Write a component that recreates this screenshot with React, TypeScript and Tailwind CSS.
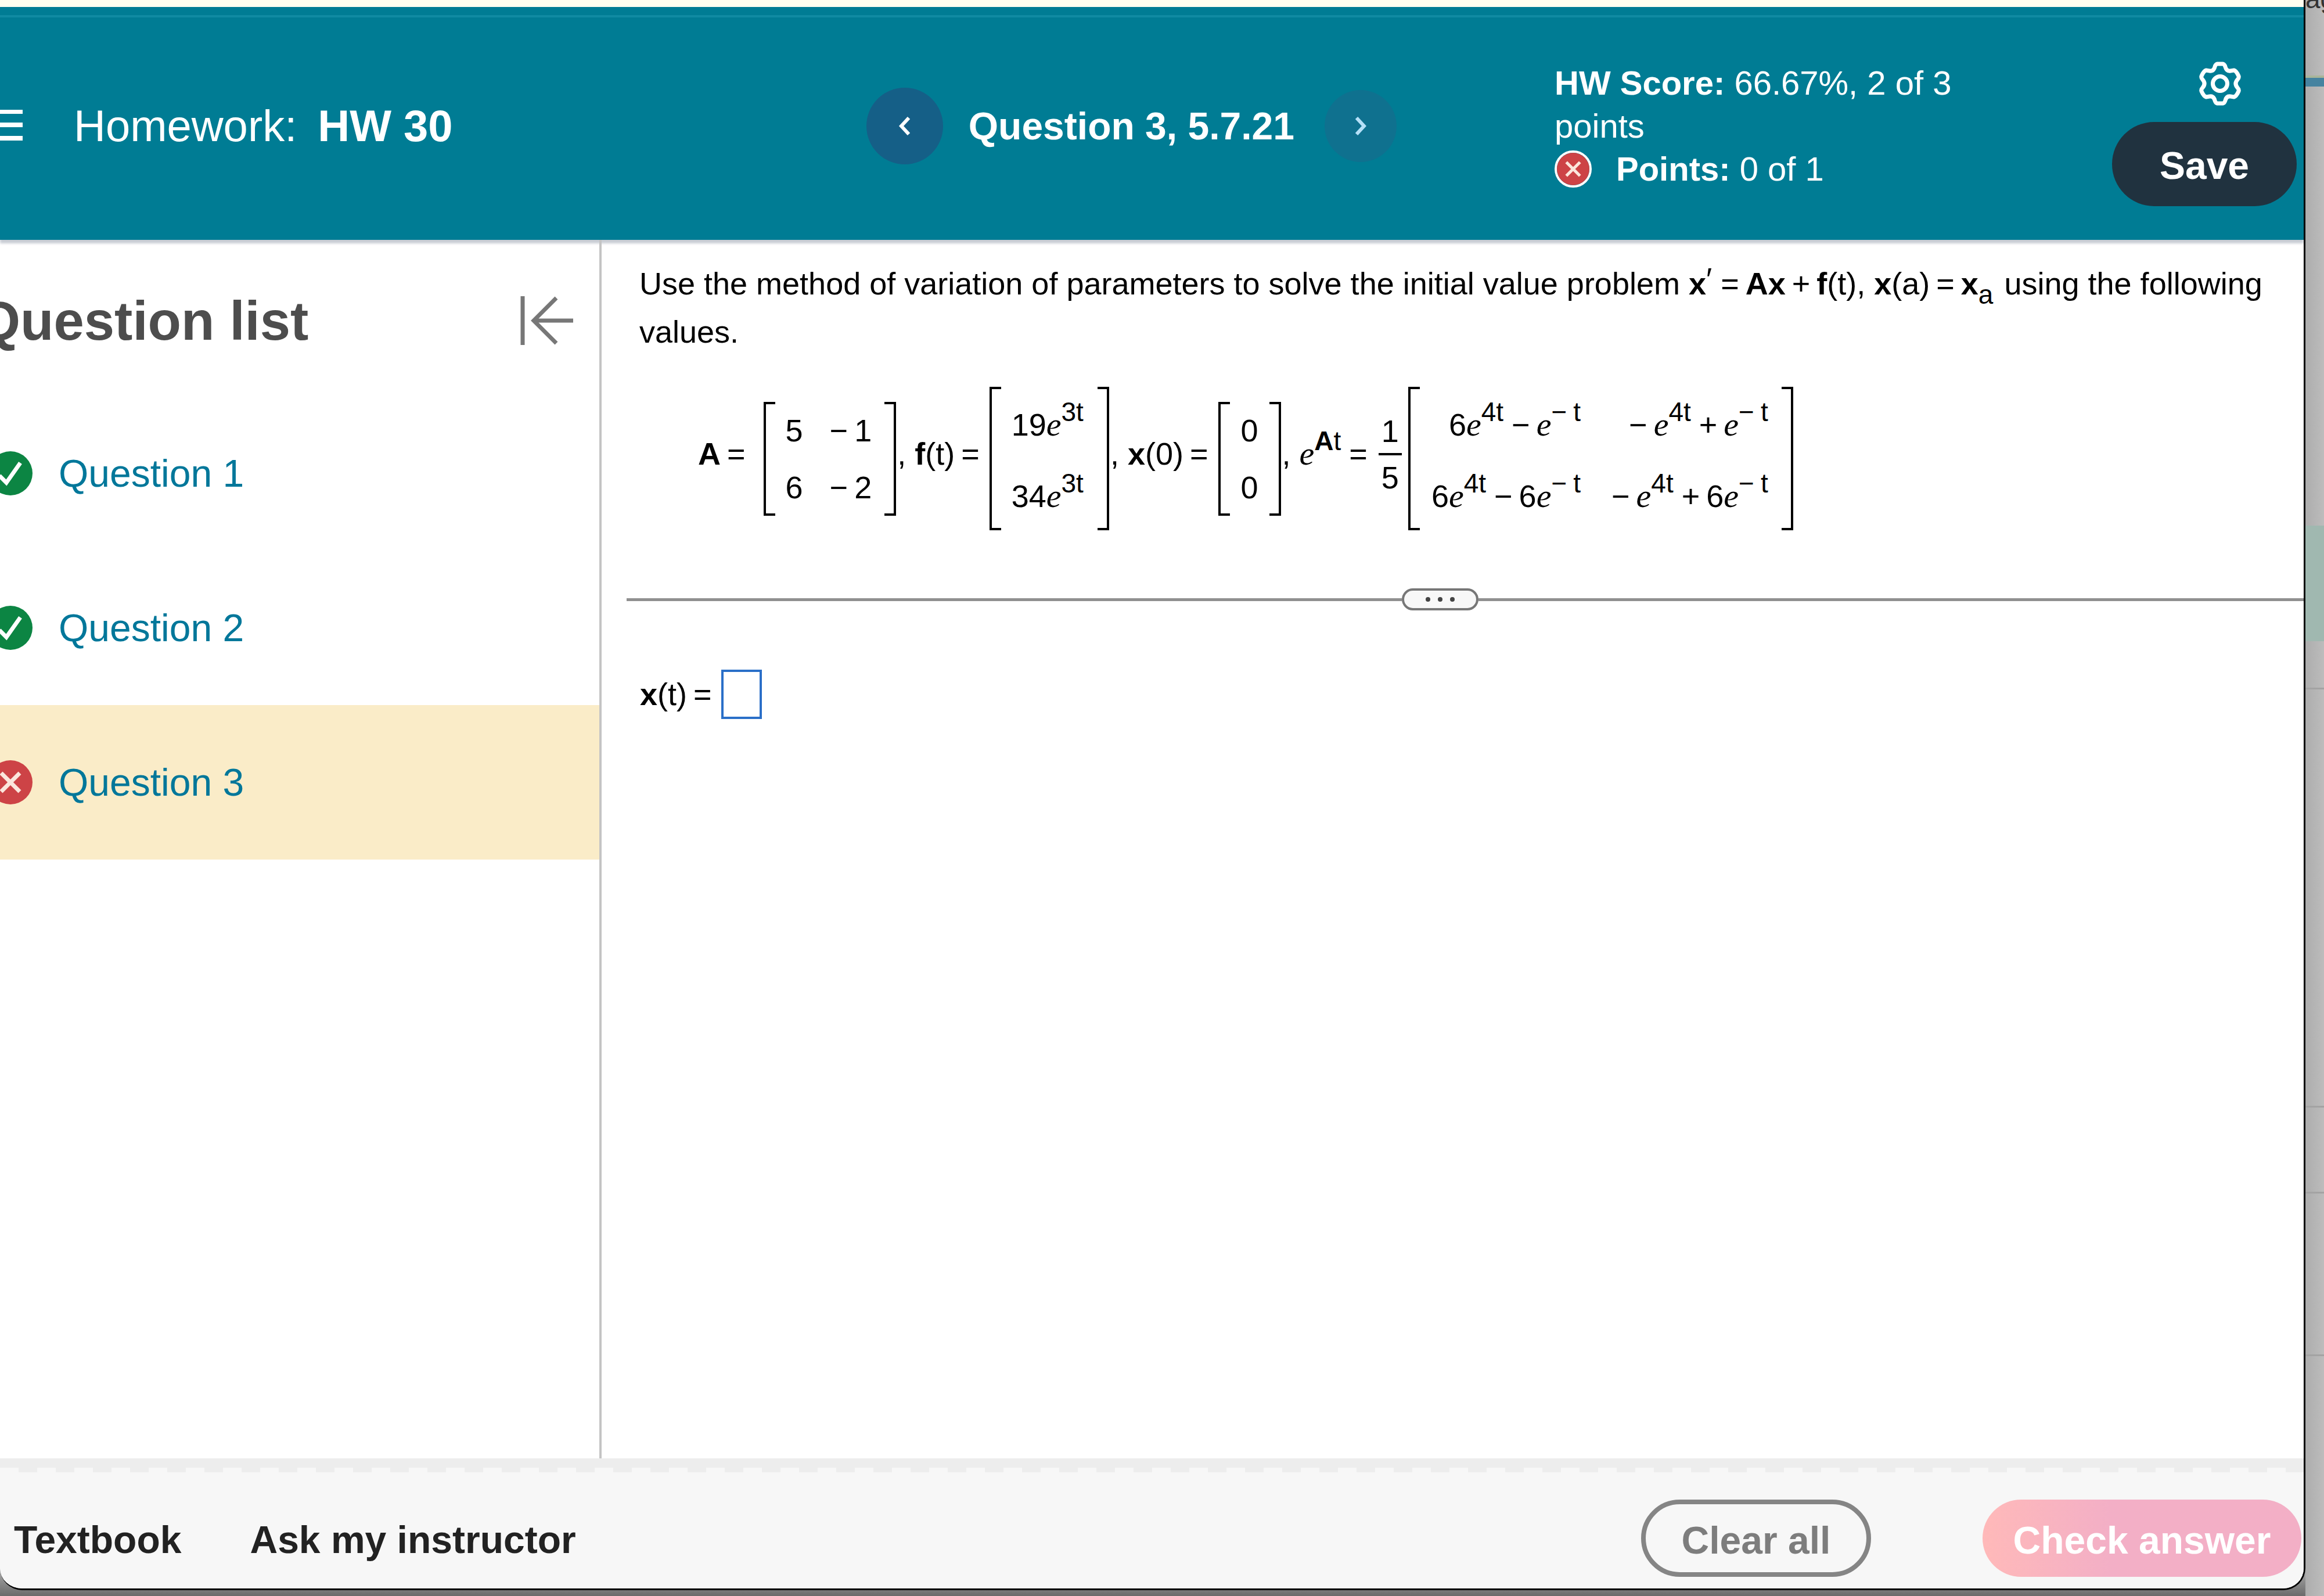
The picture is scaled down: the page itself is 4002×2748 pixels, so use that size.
import type { ReactNode } from "react";

const questions = [
  { label: "Question 1", correct: true },
  { label: "Question 2", correct: true },
  { label: "Question 3", correct: false, active: true },
];

// rules of the page that shows behind the window, with the gap above each
const backdropRows = [
  { gap: "h-[130px]", row: "h-[4px] bg-[#a9b59a]" },
  { gap: "h-0", row: "h-[15px] bg-[#4683a0]" },
  { gap: "h-[756px]", row: "h-[199px] bg-[#a0b8b0]" },
  { gap: "h-[80px]", row: "h-[3px] bg-[#a3a3a3]" },
  { gap: "h-[717px]", row: "h-[3px] bg-[#a3a3a3]" },
  { gap: "h-[145px]", row: "h-[3px] bg-[#a3a3a3]" },
  { gap: "h-[277px]", row: "h-[3px] bg-[#a3a3a3]" },
];

function StatusIcon({ correct, className }: { correct: boolean; className: string }) {
  return (
    <svg viewBox="0 0 76 76" className={className} fill="none" aria-hidden="true">
      <circle cx="38" cy="38" r="38" fill={correct ? "#0c8543" : "#cd4346"} />
      {correct ? (
        <path d="M19 42 L31 54 L55 20" stroke="#fff" strokeWidth="7" />
      ) : (
        <path d="M22 22 L54 54 M54 22 L22 54" stroke="#fbe6dc" strokeWidth="7" />
      )}
    </svg>
  );
}

function GearIcon() {
  return (
    <svg viewBox="0 0 76 76" className="size-[76px]" fill="none" stroke="#fff" strokeWidth="7" strokeLinejoin="round" aria-hidden="true">
      <path d="M33 4 H43 Q46 5 47 9 Q49 17 56 16 L62 15 Q66 16 70 25 Q71 28 68 31 Q62 38 68 45 Q71 48 70 51 Q66 60 62 61 L56 60 Q49 59 47 67 Q46 71 43 72 H33 Q30 71 29 67 Q27 59 20 60 L14 61 Q10 60 6 51 Q5 48 8 45 Q14 38 8 31 Q5 28 6 25 Q10 16 14 15 L20 16 Q27 17 29 9 Q30 5 33 4 Z" />
      <circle cx="38" cy="38" r="12.5" />
    </svg>
  );
}

function Op({ children }: { children: string }) {
  return <span className="mx-[11px]">{children}</span>;
}

function E() {
  return <i className="font-['Liberation_Serif',serif] text-[58px] leading-0">e</i>;
}

function Sup({ children }: { children: ReactNode }) {
  return <span className="mr-[3px] align-[25px] text-[46px] leading-0">{children}</span>;
}

function Neg({ children }: { children?: ReactNode }) {
  return (
    <>
      <span className="mr-[11px]">−</span>
      {children}
    </>
  );
}

function Matrix({ rows, tall, columns }: { rows: ReactNode[][]; tall?: boolean; columns: string }) {
  return (
    <span className="flex">
      <span className="w-[20px] border-y-4 border-l-4 border-black" />
      <span className={`grid ${columns} ${tall ? "gap-y-[5px] pt-[6px] leading-[118px]" : "leading-[98px]"}`}>
        {rows.flat().map((cell, i) => (
          <span key={i}>{cell}</span>
        ))}
      </span>
      <span className="w-[20px] border-y-4 border-r-4 border-black" />
    </span>
  );
}

function Term({ children }: { children: ReactNode }) {
  return <span className="ml-[2px] pb-[16px] whitespace-pre">{children}</span>;
}

function Header() {
  return (
    <header className="border-t-12 border-[#fffff0] bg-[#007c94] text-white shadow-[0_6px_4px_#c8ccd4]">
      <div className="mt-[14px] h-[4px] bg-[#108aa2]" />
      <div className="flex h-[383px] items-center pb-[10px]">
        <button className="mr-[88px] w-[39px]" aria-label="Menu">
          <svg viewBox="0 0 39 56" className="h-[56px] w-[39px]" stroke="#fff" strokeWidth="8">
            <path d="M0 3 H39 M0 26 H39 M0 49 H39" />
          </svg>
        </button>
        <h1 className="flex flex-1 gap-[36px] text-[76px] leading-[80px]">
          <span>Homework:</span>
          <b>HW 30</b>
        </h1>
        <nav className="mr-[272px] flex items-center">
          <button className="flex size-[132px] items-center justify-center rounded-full bg-[#155f87]" aria-label="Previous question">
            <svg viewBox="0 0 20 32" className="h-[32px] w-[20px]" fill="none" stroke="#fff" strokeWidth="6">
              <path d="M17 2 L4 16 L17 30" />
            </svg>
          </button>
          <h2 className="mr-[52px] ml-[44px] text-[66px] leading-[80px] font-bold">Question 3, 5.7.21</h2>
          <button className="flex size-[124px] items-center justify-center rounded-full bg-[#0f718f]" aria-label="Next question">
            <svg viewBox="0 0 20 32" className="h-[32px] w-[20px]" fill="none" stroke="#b5e0f8" strokeWidth="6">
              <path d="M3 2 L16 16 L3 30" />
            </svg>
          </button>
        </nav>
        <div className="w-[760px] text-[58px] leading-[74px]">
          <p>
            <b>HW Score:</b> 66.67%, 2 of 3
            <br />
            points
          </p>
          <p className="flex items-center gap-[42px]">
            <span className="size-[64px] rounded-full border-4 border-white">
              <StatusIcon correct={false} className="size-full" />
            </span>
            <span>
              <b>Points:</b> 0 of 1
            </span>
          </p>
        </div>
        <div className="mr-[12px] flex w-[518px] flex-col items-end gap-[28px] pt-[28px]">
          <button className="mr-[94px]" aria-label="Settings">
            <GearIcon />
          </button>
          <button className="h-[145px] w-[318px] rounded-full bg-[#20323f] pt-[6px] text-[66px] font-bold">Save</button>
        </div>
      </div>
    </header>
  );
}

function Sidebar() {
  return (
    <aside className="w-[1036px] border-r-4 border-[#c4c4c4] pt-[84px]">
      <div className="mb-[75px] flex h-[110px] items-center justify-between pr-[43px]">
        <h2 className="-ml-[38px] text-[94px] font-bold text-[#4d4d4d]">Question list</h2>
        <button aria-label="Collapse question list">
          <svg viewBox="0 0 94 86" className="h-[86px] w-[94px]" fill="none" stroke="#777" strokeWidth="7">
            <path d="M5 1 V85 M92 43 H24 M63 4 L24 43 L63 82" />
          </svg>
        </button>
      </div>
      <ul>
        {questions.map((q) => (
          <li key={q.label} className={q.active ? "bg-[#faecc8]" : ""}>
            <a href="#" className="-ml-[20px] flex h-[266px] items-center gap-[45px] text-[66px] text-[#00779a]">
              <StatusIcon correct={q.correct} className="size-[76px]" />
              {q.label}
            </a>
          </li>
        ))}
      </ul>
    </aside>
  );
}

function Problem() {
  return (
    <section className="flex-1 pt-[34px] text-[54px] leading-[83px] text-black">
      <p className="pr-[60px] pl-[65px]">
        Use the method of variation of parameters to solve the initial value problem <b>x</b>
        <span className="mr-[4px] align-[8px] leading-0">′</span>
        <Op>=</Op>
        <b>Ax</b>
        <Op>+</Op>
        <b>f</b>(t), <b>x</b>(a)
        <Op>=</Op>
        <b>x</b>
        <span className="mr-[4px] align-[-16px] text-[46px] leading-0">a</span> using the following values.
      </p>

      <div className="mt-[53px] flex items-center pl-[164px]">
        <Term>
          <b>A</b>
          <Op>=</Op>
        </Term>
        <span className="w-[20px]" />
        <Matrix
          columns="grid-cols-[auto_auto] gap-x-[46px] pl-[18px] pr-[22px]"
          rows={[
            ["5", <Neg key="a">1</Neg>],
            ["6", <Neg key="b">2</Neg>],
          ]}
        />
        <Term>
          , <b>f</b>(t)
          <Op>=</Op>
        </Term>
        <span className="w-[6px]" />
        <Matrix tall columns="pl-[18px] pr-[21px]" rows={[[<>19<E /><Sup>3t</Sup></>], [<>34<E /><Sup>3t</Sup></>]]} />
        <Term>
          , <b>x</b>(0)
          <Op>=</Op>
        </Term>
        <span className="w-[6px]" />
        <Matrix columns="px-[19px]" rows={[["0"], ["0"]]} />
        <Term>
          , <E />
          <Sup>
            <b>A</b>t
          </Sup>
          <Op>=</Op>
        </Term>
        <span className="mr-[11px] ml-[8px] flex flex-col items-center pb-[16px] leading-[76px]">
          <span>1</span>
          <span className="h-[4px] w-[40px] bg-black" />
          <span>5</span>
        </span>
        <Matrix
          tall
          columns="grid-cols-[auto_auto] gap-x-[50px] pl-[20px] pr-[20px] text-right"
          rows={[
            [
              <>6<E /><Sup>4t</Sup><Op>−</Op><E /><Sup><Neg>t</Neg></Sup></>,
              <><Neg><E /></Neg><Sup>4t</Sup><Op>+</Op><E /><Sup><Neg>t</Neg></Sup></>,
            ],
            [
              <>6<E /><Sup>4t</Sup><Op>−</Op>6<E /><Sup><Neg>t</Neg></Sup></>,
              <><Neg><E /></Neg><Sup>4t</Sup><Op>+</Op>6<E /><Sup><Neg>t</Neg></Sup></>,
            ],
          ]}
        />
      </div>

      <div className="mt-[100px] flex items-center pl-[43px]">
        <span className="h-[5px] w-[1335px] bg-[#909090]" />
        <button className="flex h-[38px] w-[132px] items-center justify-center gap-[13px] rounded-full border-4 border-[#777] bg-[#f8f8f8]" aria-label="Resize panes">
          <span className="size-[8px] rounded-full bg-[#444]" />
          <span className="size-[8px] rounded-full bg-[#444]" />
          <span className="size-[8px] rounded-full bg-[#444]" />
        </button>
        <span className="h-[5px] flex-1 bg-[#909090]" />
      </div>

      <label className="mt-[102px] flex items-center pl-[66px]">
        <b>x</b>(t)
        <Op>=</Op>
        <input className="ml-[5px] h-[85px] w-[70px] border-4 border-[#2a6fc8] px-2" aria-label="x(t)" />
      </label>
    </section>
  );
}

function Footer() {
  return (
    <footer className="bg-[#f7f7f7] text-[66px] font-bold">
      <div className="h-[16px] bg-[#ededed]" />
      <div className="h-[8px] bg-[repeating-linear-gradient(90deg,#f7f7f7_0_32px,#ededed_32px_64px)]" />
      <div className="flex h-[200px] items-center pt-[26px] pr-[4px] pl-[24px] text-[#222]">
        <button className="mr-[118px] pt-[6px]">Textbook</button>
        <button className="pt-[6px]">Ask my instructor</button>
        <button className="mr-[192px] ml-auto h-[133px] w-[396px] rounded-full border-8 border-[#858585] pt-[8px] text-[#7d7d7d]">Clear all</button>
        <button className="h-[133px] w-[549px] rounded-full bg-linear-to-r from-[#ffb9b9] to-[#f3afc6] to-40% pt-[8px] text-white">Check answer</button>
      </div>
    </footer>
  );
}

export default function App() {
  return (
    <div className="flex min-h-screen overflow-hidden bg-linear-to-b from-[#b8b8b8] from-98% to-[#6b6b6b] font-['Liberation_Sans',Arial,sans-serif]">
      <div className="mb-[10px] flex min-w-0 flex-1 flex-col overflow-hidden rounded-b-[38px] border-r-3 border-b-3 border-black bg-white">
        <Header />
        <main className="flex flex-1">
          <Sidebar />
          <Problem />
        </main>
        <Footer />
      </div>
      <div className="relative w-[32px] overflow-hidden bg-linear-to-r from-[#adadad] to-[#bcbcbc]">
        <span className="absolute -top-[24px] left-0 text-[46px] leading-[44px] text-[#333]">ag</span>
        {backdropRows.map((r, i) => (
          <div key={i}>
            <div className={r.gap} />
            <div className={r.row} />
          </div>
        ))}
      </div>
    </div>
  );
}
